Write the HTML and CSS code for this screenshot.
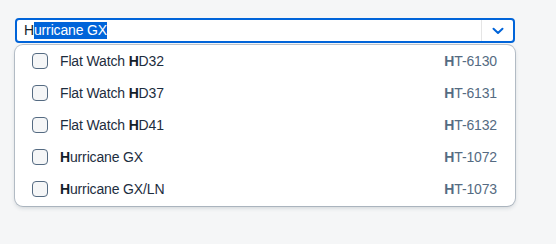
FILE: index.html
```html
<!DOCTYPE html>
<html>
<head>
<meta charset="utf-8">
<link rel="stylesheet" href="styles.css">
</head>
<body>
<div class="wrap">
  <div class="combo">
    <div class="field"><span class="typed">H</span><span class="sel">urricane GX</span></div>
    <div class="btn">
      <svg width="12" height="8" viewBox="0 0 12 8"><path d="M1.5 1.8 L6 6 L10.5 1.8" fill="none" stroke="#0064d9" stroke-width="2" stroke-linecap="round" stroke-linejoin="round"/></svg>
    </div>
  </div>
  <div class="popover">
    <div class="row"><span class="cb"></span><span class="name">Flat Watch <b>H</b>D32</span><span class="code"><b>H</b>T-6130</span></div>
    <div class="row"><span class="cb"></span><span class="name">Flat Watch <b>H</b>D37</span><span class="code"><b>H</b>T-6131</span></div>
    <div class="row"><span class="cb"></span><span class="name">Flat Watch <b>H</b>D41</span><span class="code"><b>H</b>T-6132</span></div>
    <div class="row"><span class="cb"></span><span class="name"><b>H</b>urricane GX</span><span class="code"><b>H</b>T-1072</span></div>
    <div class="row"><span class="cb"></span><span class="name"><b>H</b>urricane GX/LN</span><span class="code"><b>H</b>T-1073</span></div>
  </div>
</div>
</body>
</html>
```
FILE: styles.css
```css
html, body { margin: 0; padding: 0; }
body {
  background: #f5f6f7;
  width: 556px;
  height: 244px;
  font-family: "Liberation Sans", Arial, sans-serif;
  font-size: 14px;
  letter-spacing: -0.15px;
  color: #1d2d3e;
}
.wrap {
  padding: 18px 0 0 15px;
  width: 500px;
}
.combo {
  display: flex;
  height: 25px;
  box-sizing: border-box;
  border: 2px solid #0064d9;
  border-radius: 4px;
  background: #fff;
}
.field {
  flex: 1;
  display: flex;
  align-items: center;
  padding-left: 7px;
  color: #131e29;
  line-height: 17px;
}
.sel {
  background: #0064d9;
  color: #fff;
}
.btn {
  width: 31px;
  display: flex;
  align-items: center;
  justify-content: center;
  border-left: 1px solid #e5e5e5;
}
.popover {
  margin-top: 2px;
  background: #fff;
  border-radius: 8px;
  box-shadow: 0 0 0 1px rgba(85,107,130,0.35), 0 2px 4px rgba(34,53,72,0.18);
  height: 161px;
  box-sizing: border-box;
}
.row {
  display: flex;
  align-items: center;
  height: 32px;
  padding: 0 18px 0 17px;
}
.row:first-child { height: 32px; margin-top: 0; }
.cb {
  width: 16px;
  height: 16px;
  box-sizing: border-box;
  border: 1px solid #556b82;
  border-radius: 4px;
  background: #f5f6f7;
  margin-right: 12px;
  flex: none;
}
.name {
  flex: 1;
  color: #1d2d3e;
}
.name b { font-weight: bold; color: #131e29; }
.code {
  color: #556b82;
}
.code b { font-weight: bold; color: #556b82; }
```
